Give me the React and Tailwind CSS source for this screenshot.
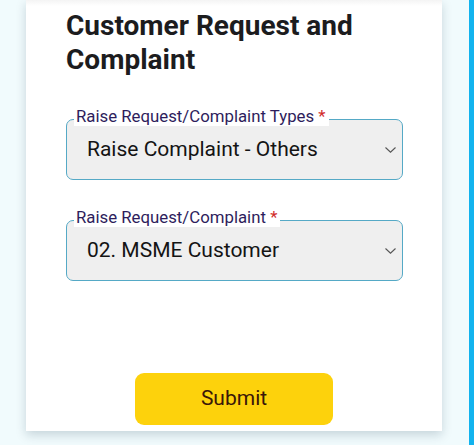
import React from 'react';

function Chevron() {
    return (
        <svg width="13" height="8" viewBox="0 0 13 8" fill="none" className="shrink-0">
            <path d="M1.5 1.5 L6.5 6.2 L11.5 1.5" stroke="#555" strokeWidth="1.1" />
        </svg>
    );
}

function SelectBox({ label, value }) {
    return (
        <div className="relative h-[61px] w-[337px] rounded-[7px] border-[1.5px] border-[#55a9c6] bg-[#efefef] flex items-center pl-[20px] pr-[5px]">
            <span className="absolute left-[7px] -top-[14px] bg-white pl-[2px] pr-[3px] text-[16.8px] leading-[20px] text-[#2e1d5c]">
                {label} <span className="text-[#d12b2b]">*</span>
            </span>
            <span className="flex-1 text-[21px] text-[#141414] pt-[1px]">{value}</span>
            <Chevron />
        </div>
    );
}

export default function App() {
    return (
        <div className="w-[474px] h-[445px] bg-[#f1fbfd] flex overflow-hidden" style={{ fontFamily: 'Roboto, "Liberation Sans", sans-serif' }}>
            <div className="ml-[26px] w-[416px] h-[431px] bg-white shadow-[0_4px_10px_rgba(0,40,60,0.18)] flex flex-col">
                <div className="h-[6px] bg-gradient-to-b from-[#f4f4f4] to-white"></div>
                <div className="pl-[40px] pt-[3px] flex flex-col">
                    <h1 className="text-[28px] leading-[34px] font-bold text-[#1c1c1e]">
                        Customer Request and<br />Complaint
                    </h1>
                    <div className="mt-[42px] flex flex-col gap-[40px]">
                        <SelectBox label="Raise Request/Complaint Types" value="Raise Complaint - Others" />
                        <SelectBox label="Raise Request/Complaint" value="02. MSME Customer" />
                    </div>
                </div>
                <div className="mt-auto mb-[6px] flex justify-center">
                    <button className="w-[198px] h-[52px] rounded-[9px] bg-[#fdd20c] text-[21px] text-[#3a1708]">
                        Submit
                    </button>
                </div>
            </div>
            <div className="ml-auto w-[5px] h-full bg-[#12b3ee]"></div>
        </div>
    );
}
